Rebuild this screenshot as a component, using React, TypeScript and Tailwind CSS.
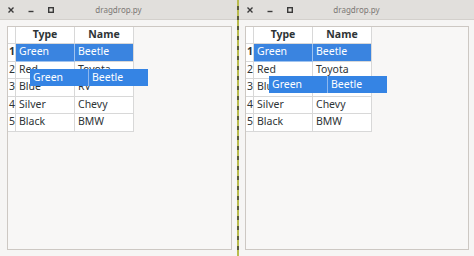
import React from "react";

const rows: [string, string][] = [
  ["Green", "Beetle"],
  ["Red", "Toyota"],
  ["Blue", "RV"],
  ["Silver", "Chevy"],
  ["Black", "BMW"],
];

function TitleBar() {
  return (
    <div className="relative h-[20px] bg-[#e1dfdc] border-b border-[#d3d0cc] flex items-center pl-[1px]">
      <div className="w-[20px] h-full flex items-center justify-center">
        <svg width="6" height="6" viewBox="0 0 6 6">
          <path d="M0.5 0.5 L5.5 5.5 M5.5 0.5 L0.5 5.5" stroke="#3a3a3a" strokeWidth="1.4" />
        </svg>
      </div>
      <div className="w-[20px] h-full flex items-center justify-center">
        <svg width="6" height="6" viewBox="0 0 6 6">
          <path d="M0.5 4.5 L5.5 4.5" stroke="#3a3a3a" strokeWidth="1.4" />
        </svg>
      </div>
      <div className="w-[20px] h-full flex items-center justify-center">
        <svg width="6" height="6" viewBox="0 0 6 6">
          <rect x="0.7" y="0.7" width="4.6" height="4.6" fill="none" stroke="#3a3a3a" strokeWidth="1.4" />
        </svg>
      </div>
      <div className="absolute inset-0 flex items-center justify-center pointer-events-none text-[8px] text-[#7b7875] font-['Noto_Sans',sans-serif]">
        dragdrop.py
      </div>
    </div>
  );
}

function Table({ pixLeft, pixTop }: { pixLeft: string; pixTop: string }) {
  return (
    <div className="relative h-full border border-[#cdc8c3] bg-[#f8f7f6] font-['Noto_Sans',sans-serif] text-[10.5px] text-[#2e3436]">
      <div className="grid grid-cols-[8px_59px_59px] w-fit">
        <div className="h-[17px] bg-white border-r border-b border-[#d8d8d8]" />
        <div className="h-[17px] bg-white border-r border-b border-[#d8d8d8] flex items-center justify-center font-bold">
          Type
        </div>
        <div className="h-[17px] bg-white border-r border-b border-[#d8d8d8] flex items-center justify-center font-bold">
          Name
        </div>
        {rows.map((r, i) => {
          const sel = i === 0;
          return (
            <React.Fragment key={i}>
              <div
                className={
                  "h-[17.5px] bg-white border-r border-b border-[#d8d8d8] flex items-center pl-[1px] " +
                  (sel ? "font-bold" : "")
                }
              >
                {i + 1}
              </div>
              <div
                className={
                  sel
                    ? "h-[17.5px] bg-[#3a84e0] text-white border-r border-b border-[#9fc3ef] flex items-center pl-[3px]"
                    : "h-[17.5px] bg-white border-r border-b border-[#d8d8d8] flex items-center pl-[3px]"
                }
              >
                {r[0]}
              </div>
              <div
                className={
                  sel
                    ? "h-[17.5px] bg-[#3a84e0] text-white border-r border-b border-[#d8d8d8] flex items-center pl-[3px]"
                    : "h-[17.5px] bg-white border-r border-b border-[#d8d8d8] flex items-center pl-[3px]"
                }
              >
                {r[1]}
              </div>
            </React.Fragment>
          );
        })}
      </div>
      <div className={"absolute h-[17px] w-[118px] flex bg-[#3584e4] text-white " + pixLeft + " " + pixTop}>
        <div className="w-[58px] flex items-center pl-[3px]">Green</div>
        <div className="w-[1px] bg-[#8db7ee]" />
        <div className="flex-1 flex items-center pl-[3px]">Beetle</div>
      </div>
    </div>
  );
}

export default function App() {
  return (
    <div className="w-[474px] h-[256px] flex bg-[#f6f5f4] overflow-hidden">
      <div className="w-[237px] h-full flex flex-col">
        <TitleBar />
        <div className="flex-1 pt-[6px] pl-[7px] pr-[5px] pb-[6px]">
          <Table pixLeft="left-[22px]" pixTop="top-[42px]" />
        </div>
      </div>
      <div className="w-[2px] h-full border-l-2 border-dashed border-[#b9bc4e] bg-[#5a5a3a]" />
      <div className="flex-1 h-full flex flex-col">
        <TitleBar />
        <div className="flex-1 pt-[6px] pl-[6px] pr-[5px] pb-[6px]">
          <Table pixLeft="left-[23px]" pixTop="top-[49px]" />
        </div>
      </div>
    </div>
  );
}
